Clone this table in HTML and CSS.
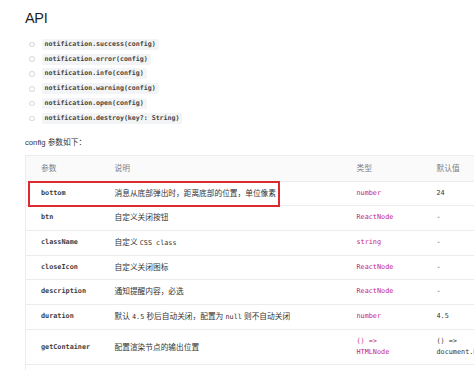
FILE: index.html
```html
<!DOCTYPE html>
<html>

<head>
	<meta charset="utf-8">
	<title>Notification API</title>
	<meta name="viewport" content="width=device-width, initial-scale=1">
	<link rel="stylesheet" href="styles.css">
</head>

<body>
	<section class='api'>
		<h2 class='api__hed'>API</h2>
		<ul class='api__list'>
			<li><code>notification.success(config)</code></li>
			<li><code>notification.error(config)</code></li>
			<li><code>notification.info(config)</code></li>
			<li><code>notification.warning(config)</code></li>
			<li><code>notification.open(config)</code></li>
			<li><code>notification.destroy(key?: String)</code></li>
		</ul>
		<p class='api__dek'>config 参数如下：</p>

		<div class='table-wrap'>
			<table class='api-table'>
				<colgroup>
					<col class='col-name'>
					<col class='col-desc'>
					<col class='col-type'>
					<col class='col-default'>
					<col class='col-rest'>
				</colgroup>
				<thead>
					<tr>
						<th>参数</th>
						<th>说明</th>
						<th>类型</th>
						<th>默认值</th>
						<th></th>
					</tr>
				</thead>
				<tbody>
					<tr class='is-marked'>
						<td>bottom<span class='mark'></span></td>
						<td>消息从底部弹出时，距离底部的位置，单位像素</td>
						<td class='type'>number</td>
						<td>24</td>
						<td></td>
					</tr>
					<tr>
						<td>btn</td>
						<td>自定义关闭按钮</td>
						<td class='type'>ReactNode</td>
						<td>-</td>
						<td></td>
					</tr>
					<tr>
						<td>className</td>
						<td>自定义 <span class='mono'>CSS class</span></td>
						<td class='type'>string</td>
						<td>-</td>
						<td></td>
					</tr>
					<tr>
						<td>closeIcon</td>
						<td>自定义关闭图标</td>
						<td class='type'>ReactNode</td>
						<td>-</td>
						<td></td>
					</tr>
					<tr>
						<td>description</td>
						<td>通知提醒内容，必选</td>
						<td class='type'>ReactNode</td>
						<td>-</td>
						<td></td>
					</tr>
					<tr>
						<td>duration</td>
						<td>默认 <span class='mono'>4.5</span> 秒后自动关闭，配置为 <span class='mono'>null</span> 则不自动关闭</td>
						<td class='type'>number</td>
						<td>4.5</td>
						<td></td>
					</tr>
					<tr>
						<td>getContainer</td>
						<td>配置渲染节点的输出位置</td>
						<td class='type'>() =&gt; HTMLNode</td>
						<td>() =&gt; document.body</td>
						<td></td>
					</tr>
					<tr>
						<td>&nbsp;</td>
						<td></td>
						<td></td>
						<td></td>
						<td></td>
					</tr>
				</tbody>
			</table>
		</div>
	</section>
</body>

</html>
```

FILE: styles.css
```css
/* page */

* {
	box-sizing: border-box;
}

html,
body {
	margin: 0;
	padding: 0;
	background: #fff;
	font-family: 'Liberation Sans', 'Noto Sans CJK SC', sans-serif;
	color: #333;
}

body {
	overflow: hidden;
}

p,
h2,
ul {
	margin: 0;
	padding: 0;
}

code,
.mono,
.type,
.api-table td:first-child {
	font-family: 'DejaVu Sans Mono', 'Liberation Mono', 'Noto Sans CJK SC', monospace;
}

/* intro */

.api {
	padding: 10px 0 0 25px;
}

.api__hed {
	font-size: 14.5px;
	font-weight: 400;
	line-height: 17px;
	color: #1f1f1f;
	letter-spacing: -0.3px;
}

.api__list {
	list-style: none;
	margin-top: 10px;
	padding-left: 4px;
}

.api__list li {
	display: flex;
	align-items: center;
	gap: 7px;
	height: 14.8px;
}

.api__list li::before {
	content: '';
	width: 3.5px;
	height: 3.5px;
	border: 1px solid #d4d4d4;
	border-radius: 50%;
}

.api__list code {
	font-size: 6.6px;
	font-weight: 700;
	line-height: 11px;
	padding: 0 3px;
	background: #f2f4f5;
	border-radius: 2px;
	color: #444;
}

.api__dek {
	margin-top: 11px;
	font-size: 7.7px;
	line-height: 11px;
	color: #333;
}

/* table */

.table-wrap {
	position: relative;
	margin-top: 7px;
	overflow: hidden;
}

.api-table {
	table-layout: fixed;
	width: 560px;
	border-collapse: collapse;
	border-left: 1px solid #ececec;
	font-size: 7.7px;
}

.col-name {
	width: 74px;
}

.col-desc {
	width: 242px;
}

.col-type {
	width: 80px;
}

.col-default {
	width: 85px;
}

.api-table th,
.api-table td {
	padding: 6.2px 15px;
	line-height: 11px;
	text-align: left;
	border-top: 1px solid #ececec;
	border-bottom: 1px solid #ececec;
	vertical-align: middle;
}

.api-table th {
	padding: 7px 15px;
	font-weight: 400;
	color: #7a8087;
	background: #fafafa;
}

.api-table td {
	color: #333;
}

.api-table td:first-child {
	position: relative;
	font-size: 6.8px;
	font-weight: 700;
	color: #3c3c3c;
}

.api-table .mono {
	font-size: 6.8px;
}

.api-table td.type {
	font-size: 6.8px;
	color: #c41d7f;
}

.api-table td:nth-child(4) {
	font-family: 'DejaVu Sans Mono', 'Liberation Mono', monospace;
	font-size: 6.8px;
}

/* red annotation box over the first row */

.mark {
	position: absolute;
	left: 2px;
	top: -1px;
	width: 252px;
	height: 26px;
	border: 2px solid #dc2a30;
	pointer-events: none;
}
```
